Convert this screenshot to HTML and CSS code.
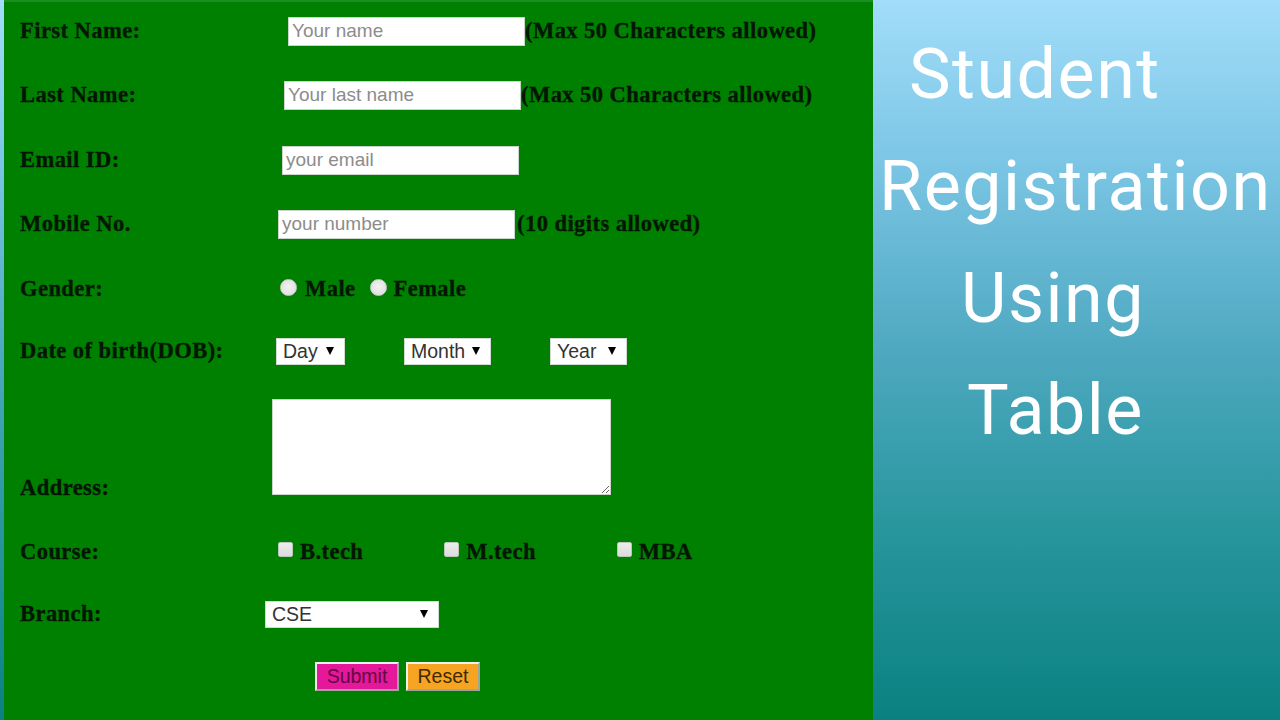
FILE: index.html
```html
<!DOCTYPE html>
<html lang="en">
<head>
<meta charset="utf-8">
<title>Student Registration Using Table</title>
<link rel="stylesheet" href="styles.css">
</head>
<body>
<div class="page">
  <form class="panel">
    <div class="row r1">
      <span class="label">First Name:</span>
      <div class="ctl o1">
        <input class="text" type="text" placeholder="Your name">
        <span class="note">(Max 50 Characters allowed)</span>
      </div>
    </div>
    <div class="row r2">
      <span class="label">Last Name:</span>
      <div class="ctl o2">
        <input class="text" type="text" placeholder="Your last name">
        <span class="note">(Max 50 Characters allowed)</span>
      </div>
    </div>
    <div class="row r3">
      <span class="label">Email ID:</span>
      <div class="ctl o3">
        <input class="text" type="text" placeholder="your email">
      </div>
    </div>
    <div class="row r4">
      <span class="label">Mobile No.</span>
      <div class="ctl o4">
        <input class="text" type="text" placeholder="your number">
        <span class="note n2">(10 digits allowed)</span>
      </div>
    </div>
    <div class="row r5">
      <span class="label">Gender:</span>
      <div class="ctl o5">
        <input class="radio" type="radio" name="g">
        <span class="opt">Male</span>
        <input class="radio rb2" type="radio" name="g">
        <span class="opt">Female</span>
      </div>
    </div>
    <div class="row r6">
      <span class="label">Date of birth(DOB):</span>
      <div class="ctl o6 dob">
        <span class="selbox"><select class="sel s-day"><option>Day</option></select><span class="arrow"></span></span>
        <span class="selbox"><select class="sel s-month"><option>Month</option></select><span class="arrow"></span></span>
        <span class="selbox"><select class="sel s-year"><option>Year</option></select><span class="arrow"></span></span>
      </div>
    </div>
    <div class="row r7">
      <span class="label addr">Address:</span>
      <div class="ctl o7 addr-ctl">
        <textarea class="area"></textarea>
      </div>
    </div>
    <div class="row r8">
      <span class="label">Course:</span>
      <div class="ctl o8 course">
        <span class="citem"><input class="check" type="checkbox"><span class="opt">B.tech</span></span>
        <span class="citem"><input class="check" type="checkbox"><span class="opt">M.tech</span></span>
        <span class="citem"><input class="check" type="checkbox"><span class="opt">MBA</span></span>
      </div>
    </div>
    <div class="row r9">
      <span class="label">Branch:</span>
      <div class="ctl o9">
        <span class="selbox"><select class="sel s-branch"><option>CSE</option></select><span class="arrow"></span></span>
      </div>
    </div>
    <div class="row r10">
      <span class="label"></span>
      <div class="ctl o10 btns">
        <button class="btn submit" type="button">Submit</button>
        <button class="btn reset" type="button">Reset</button>
      </div>
    </div>
  </form>
  <div class="title">
    <div class="line t1">Student</div>
    <div class="line t2">Registration</div>
    <div class="line t3">Using</div>
    <div class="line t4">Table</div>
  </div>
</div>
</body>
</html>
```
FILE: styles.css
```css
html, body {
  margin: 0;
  padding: 0;
  width: 1280px;
  height: 720px;
  overflow: hidden;
}
body {
  background: linear-gradient(to bottom, #a2ddf9 0%, #7cc6e6 22%, #4fa9c1 48%, #2a979f 72%, #0a8181 100%);
}
.page {
  display: flex;
  height: 720px;
}
.panel {
  margin: 0 0 0 4px;
  width: 869px;
  height: 720px;
  box-sizing: border-box;
  background: #008000;
  border-top: 2px solid #1e8e22;
  padding-left: 16px;
  display: flex;
  flex-direction: column;
  font-family: "Liberation Serif", "Times New Roman", serif;
  font-weight: bold;
  font-size: 22.5px;
  letter-spacing: 0.45px;
  color: #031603;
  -webkit-text-stroke: 0.35px #031603;
}
.row {
  display: flex;
  align-items: center;
}
.r1 { height: 58px; }
.r2 { height: 70px; }
.r3 { height: 60px; }
.r4 { height: 68px; }
.r5 { height: 62px; }
.r6 { height: 62px; }
.r7 { height: 138px; align-items: stretch; }
.r8 { height: 64px; }
.r9 { height: 60px; }
.r10 { height: 64px; }

.label {
  flex: 0 0 245px;
  line-height: 26px;
  white-space: nowrap;
}
.ctl {
  display: flex;
  align-items: center;
}
.o1 { margin-left: 23px; }
.o2 { margin-left: 19px; }
.o3 { margin-left: 17px; }
.o4 { margin-left: 13px; }
.o5 { margin-left: 15px; }
.o6 { margin-left: 11px; }
.o7 { margin-left: 7px; }
.o8 { margin-left: 13px; }
.o9 { margin-left: 0; }
.o10 { margin-left: 50px; }

.text {
  box-sizing: border-box;
  width: 237px;
  height: 29px;
  margin: 0;
  padding: 0 3px;
  border: 1px solid #c9d6c9;
  background: #fff;
  font-family: "Liberation Sans", Arial, sans-serif;
  font-size: 19px;
  color: #333;
  outline: none;
  -webkit-text-stroke: 0;
}
.text::placeholder {
  color: #8c8c8c;
}
.note {
  line-height: 26px;
  white-space: nowrap;
}
.n2 { margin-left: 2px; }

.radio {
  appearance: none;
  -webkit-appearance: none;
  box-sizing: border-box;
  width: 17px;
  height: 17px;
  margin: 0 8px 3px 0;
  border-radius: 50%;
  border: 1px solid #c6cfc6;
  background: radial-gradient(circle at 50% 45%, #f2f2f2 0%, #e2e2e2 70%, #d2d2d2 100%);
}
.rb2 { margin-left: 14px; margin-right: 7px; }
.opt {
  line-height: 26px;
  white-space: nowrap;
}

.dob { gap: 60px; }
.selbox {
  display: inline-flex;
  align-items: center;
}
.sel {
  appearance: none;
  -webkit-appearance: none;
  box-sizing: border-box;
  height: 27px;
  margin: 0;
  padding: 0 0 0 6px;
  border: 1px solid #cfdccf;
  border-radius: 0;
  background: #fff;
  font-family: "Liberation Sans", Arial, sans-serif;
  font-size: 19.5px;
  font-weight: normal;
  letter-spacing: 0;
  color: #333;
  outline: none;
  -webkit-text-stroke: 0;
}
.s-day { width: 69px; }
.s-month { width: 87px; }
.s-year { width: 77px; }
.s-branch { width: 174px; }
.arrow {
  width: 0;
  height: 0;
  margin-left: -19px;
  margin-right: 10px;
  border-left: 4.5px solid transparent;
  border-right: 4.5px solid transparent;
  border-top: 8px solid #000;
  pointer-events: none;
}

.addr {
  align-self: flex-end;
  margin-bottom: 19px;
}
.addr-ctl {
  align-items: flex-start;
}
.area {
  box-sizing: border-box;
  width: 339px;
  height: 96px;
  margin: 17px 0 0 0;
  border: 1px solid #c9d6c9;
  background: #fff;
  outline: none;
}

.course { gap: 81px; }
.citem {
  display: inline-flex;
  align-items: center;
}
.check {
  appearance: none;
  -webkit-appearance: none;
  box-sizing: border-box;
  width: 15px;
  height: 15px;
  margin: 0 7px 6px 0;
  border: 1px solid #bcc6bc;
  border-radius: 2px;
  background: linear-gradient(#ececec, #dcdcdc);
}

.btns { gap: 7px; }
.btn {
  box-sizing: border-box;
  height: 29px;
  margin: 0;
  padding: 0;
  border: 2px solid;
  border-color: #eef2ee #9aa69a #9aa69a #eef2ee;
  font-family: "Liberation Sans", Arial, sans-serif;
  font-size: 19.5px;
  font-weight: normal;
  letter-spacing: 0;
  -webkit-text-stroke: 0;
}
.submit {
  width: 84px;
  background: #e5179a;
  color: #62083f;
}
.reset {
  width: 74px;
  background: #f6a421;
  color: #3d2a05;
}

.title {
  flex: 1;
  padding-top: 18px;
  font-family: Roboto, "Noto Sans", sans-serif;
  font-size: 70px;
  letter-spacing: 1.5px;
  color: #fff;
}
.line {
  line-height: 112px;
  white-space: nowrap;
}
.t1 { margin-left: 36px; }
.t2 { margin-left: 6px; }
.t3 { margin-left: 88px; }
.t4 { margin-left: 94px; }
```
